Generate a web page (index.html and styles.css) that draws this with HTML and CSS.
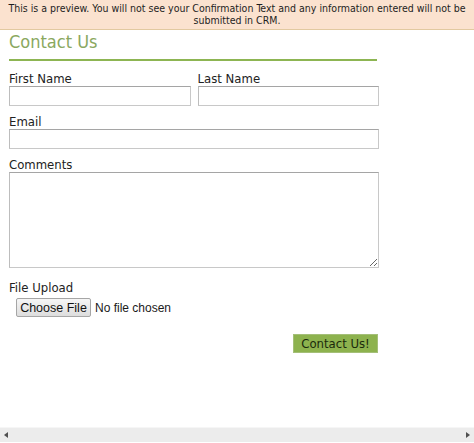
FILE: index.html
```html
<!DOCTYPE html>
<html>
<head>
<meta charset="utf-8">
<link rel="stylesheet" href="styles.css">
</head>
<body>
<div class="page">
  <div class="banner">This is a preview. You will not see your Confirmation Text and any information entered will not be submitted in CRM.</div>
  <form class="content">
    <h2 class="title">Contact Us</h2>
    <div class="row">
      <div class="field half">
        <label class="lbl">First Name</label>
        <input class="txt" type="text">
      </div>
      <div class="field half">
        <label class="lbl">Last Name</label>
        <input class="txt" type="text">
      </div>
    </div>
    <div class="field gap">
      <label class="lbl">Email</label>
      <input class="txt" type="text">
    </div>
    <div class="field gap">
      <label class="lbl">Comments</label>
      <textarea class="area"></textarea>
    </div>
    <div class="field upload">
      <label class="lbl">File Upload</label>
      <div class="filerow">
        <span class="filebtn">Choose File</span>
        <span class="filetext">No file chosen</span>
      </div>
    </div>
    <div class="actions">
      <button class="submit" type="button">Contact Us!</button>
    </div>
  </form>
  <div class="spacer"></div>
  <div class="hscroll">
    <span class="arrow left"></span>
    <span class="arrow right"></span>
  </div>
</div>
</body>
</html>
```

FILE: styles.css
```css
html, body {
  margin: 0;
  padding: 0;
  background: #ffffff;
}
.page {
  display: flex;
  flex-direction: column;
  height: 443px;
  font-family: "DejaVu Sans Condensed", "DejaVu Sans", Verdana, sans-serif;
  font-stretch: condensed;
  color: #222;
}
.banner {
  background: #fbe2cf;
  border-bottom: 1px solid #e2c9a0;
  text-align: center;
  font-size: 10.5px;
  line-height: 12px;
  padding: 2px 4px 3px;
  color: #1e1e1e;
}
.content {
  width: 370px;
  padding-left: 9px;
  display: flex;
  flex-direction: column;
}
.title {
  margin: 2px 0 0 0;
  font-size: 18px;
  font-weight: normal;
  line-height: 20px;
  color: #8aa860;
  padding-bottom: 7px;
  border-bottom: 2px solid #8db552;
  width: 368px;
}
.row {
  display: flex;
  gap: 7px;
  margin-top: 10px;
}
.field {
  display: flex;
  flex-direction: column;
}
.half {
  width: 182px;
}
.gap {
  margin-top: 8px;
}
.lbl {
  font-size: 13px;
  line-height: 15px;
  color: #222;
}
.txt {
  box-sizing: border-box;
  height: 20px;
  margin: 0;
  border: 1px solid #c8c8c8;
  border-top-color: #a5a5a5;
  border-left-color: #bdbdbd;
  padding: 0 2px;
  background: #fff;
  width: 100%;
}
.area {
  box-sizing: border-box;
  height: 96px;
  margin: 0;
  border: 1px solid #c8c8c8;
  border-top-color: #a5a5a5;
  border-left-color: #bdbdbd;
  width: 100%;
  resize: both;
}
.field.upload {
  margin-top: 12px;
}
.filerow {
  display: flex;
  align-items: center;
  padding-left: 7px;
  margin-top: 3px;
}
.filebtn {
  box-sizing: border-box;
  height: 19px;
  width: 75px;
  display: flex;
  align-items: center;
  justify-content: center;
  font-family: "Liberation Sans", Arial, sans-serif;
  font-stretch: normal;
  font-size: 12.5px;
  color: #111;
  border: 1px solid #a6a6a6;
  border-radius: 2px;
  background: linear-gradient(#f6f6f6, #dddddd);
}
.filetext {
  font-family: "Liberation Sans", Arial, sans-serif;
  font-stretch: normal;
  font-size: 12px;
  color: #1a1a1a;
  margin-left: 4px;
}
.actions {
  display: flex;
  justify-content: flex-end;
  margin-top: 17px;
  padding-right: 1px;
}
.submit {
  box-sizing: border-box;
  height: 19px;
  width: 85px;
  padding: 0;
  font-family: "DejaVu Sans Condensed", "DejaVu Sans", Verdana, sans-serif;
  font-stretch: condensed;
  font-size: 13px;
  color: #1b2a0c;
  background: #8db24e;
  border: 1px solid #a4bf78;
}
.spacer {
  flex: 1;
}
.hscroll {
  height: 14px;
  background: #ececec;
  border-top: 1px solid #f6f6f6;
  margin-bottom: 1px;
  display: flex;
  justify-content: space-between;
  align-items: center;
  padding: 0 4px;
}
.arrow {
  width: 0;
  height: 0;
  border-top: 3px solid transparent;
  border-bottom: 3px solid transparent;
}
.arrow.left {
  border-right: 4px solid #505050;
}
.arrow.right {
  border-left: 4px solid #505050;
}
```
